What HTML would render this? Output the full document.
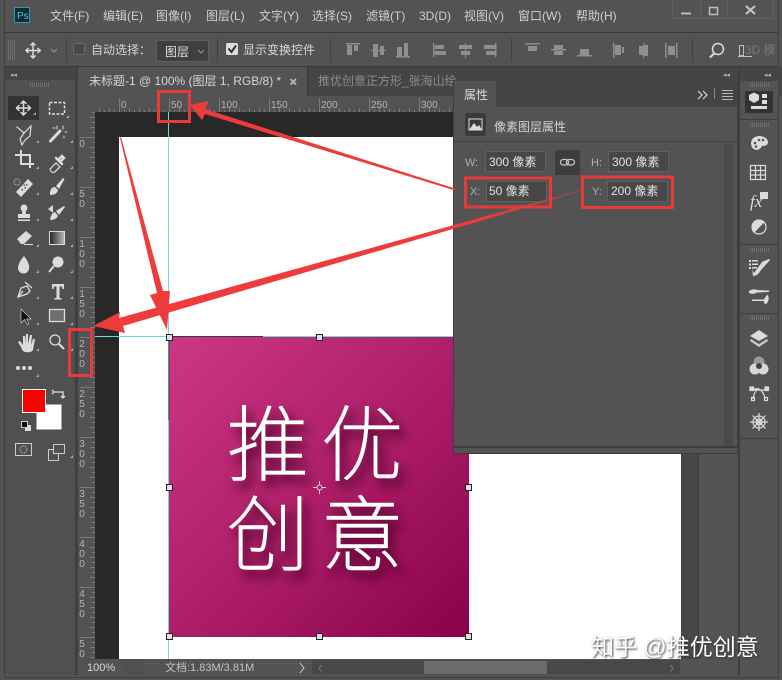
<!DOCTYPE html>
<html lang="zh">
<head>
<meta charset="utf-8">
<style>
html,body{margin:0;padding:0;background:#535353;width:782px;height:680px;overflow:hidden}
svg{display:block}
text{font-family:"Liberation Sans","Noto Sans CJK SC",sans-serif}
</style>
</head>
<body>
<svg width="782" height="680" viewBox="0 0 782 680" xmlns="http://www.w3.org/2000/svg">
<defs>
<linearGradient id="sq" x1="0" y1="0" x2="1" y2="1">
<stop offset="0" stop-color="#cc3784"/><stop offset=".5" stop-color="#ae1f69"/><stop offset="1" stop-color="#8a004a"/>
</linearGradient>
<linearGradient id="gr" x1="0" y1="0" x2="1" y2="0"><stop offset="0" stop-color="#222"/><stop offset="1" stop-color="#bbb"/></linearGradient>
<linearGradient id="ar3" gradientUnits="userSpaceOnUse" x1="490" y1="0" x2="582" y2="0"><stop offset="0" stop-color="#ee3b3b"/><stop offset="1" stop-color="#7d4f4f"/></linearGradient>
<filter id="sh" x="-30%" y="-30%" width="160%" height="160%"><feGaussianBlur stdDeviation="5"/></filter>
<filter id="wm" x="-10%" y="-30%" width="120%" height="160%"><feGaussianBlur stdDeviation="1"/></filter>
<pattern id="ht" x="119" y="96" width="10" height="16" patternUnits="userSpaceOnUse"><path d="M.5 12V16M5.500 14V16" stroke="#7a7a7a" stroke-width="1" fill="none"/></pattern>
<pattern id="vt" x="78" y="137" width="17" height="10" patternUnits="userSpaceOnUse"><path d="M12 .5H17M14 5.500H17" stroke="#7a7a7a" stroke-width="1" fill="none"/></pattern>
<pattern id="grip" width="2" height="2" patternUnits="userSpaceOnUse"><rect width="1" height="2" fill="#6e6e6e"/></pattern>
</defs>

<!-- window base -->
<rect width="782" height="680" fill="#535353"/>
<path d="M4.500 0V677M778.500 0V677M4 677.500H779" stroke="#3e3e3e" fill="none"/>
<rect y="32" x="4" width="775" height="1" fill="#3a3a3a"/>
<rect y="66" x="4" width="775" height="1" fill="#3a3a3a"/>

<!-- menu -->
<rect x="14.500" y="7.500" width="15" height="15" fill="#0f2c3a" stroke="#2f9ab0"/>
<text x="17" y="19" font-size="10" fill="#4fc3df">Ps</text>
<g font-size="12" fill="#d0d0d0">
<text x="50" y="20">文件(F)</text>
<text x="103" y="20">编辑(E)</text>
<text x="156" y="20">图像(I)</text>
<text x="206" y="20">图层(L)</text>
<text x="259" y="20">文字(Y)</text>
<text x="312" y="20">选择(S)</text>
<text x="366" y="20">滤镜(T)</text>
<text x="419" y="20">3D(D)</text>
<text x="464" y="20">视图(V)</text>
<text x="518" y="20">窗口(W)</text>
<text x="576" y="20">帮助(H)</text>
</g>
<path d="M672.500 0V18.500H773.500V0M700.500 0V18.500M727.500 0V18.500" stroke="#606060" fill="none"/>
<path d="M681 13.500H691" stroke="#bdbdbd" stroke-width="2"/>
<rect x="709.500" y="7.500" width="8" height="7" fill="none" stroke="#bdbdbd" stroke-width="1.500"/>
<path d="M746 6L755 14M755 6L746 14" stroke="#c8c8c8" stroke-width="2"/>

<!-- options bar -->
<rect x="8" y="40" width="7" height="20" fill="url(#grip)"/>
<g stroke="#dcdcdc" stroke-width="1.500" fill="none">
<path d="M33 43V58M26 50.500H41"/><path d="M30.500 45.500L33 43L35.500 45.500M30.500 55.500L33 58L35.500 55.500M28.500 48L26 50.500L28.500 53M37.500 48L40 50.500L37.500 53"/>
</g>
<path d="M51 49L54 52L57 49" stroke="#999" fill="none"/>
<path d="M66.500 38V62M217.500 38V62M330.500 38V62M511.500 38V62M692.500 38V62" stroke="#404040"/>
<rect x="73.500" y="43.500" width="11" height="11" rx="2" fill="#484848" stroke="#6a6a6a"/>
<text x="91" y="54" font-size="12" fill="#d4d4d4">自动选择：</text>
<rect x="156.500" y="40.500" width="52" height="21" rx="1" fill="#3f3f3f" stroke="#5f5f5f"/>
<text x="165" y="56" font-size="12" fill="#e0e0e0">图层</text>
<path d="M198 50L201 53L204 50" stroke="#999" fill="none"/>
<rect x="226" y="43" width="12" height="12" rx="2" fill="#dedede"/>
<path d="M228.500 48.500L231.500 52L236 45.500" stroke="#333" stroke-width="2" fill="none"/>
<text x="243" y="54" font-size="12" fill="#d8d8d8">显示变换控件</text>
<g fill="#8f8f8f">
<path d="M346 43h14v1.500h-14zM347 45h5v10h-5zM354 45h4v6h-4z"/>
<path d="M371 50h15v1h-15zM373 44h5v13h-5zM380 46h4v9h-4z"/>
<path d="M396 56h14v1.500h-14zM397 47h5v9h-5zM404 43h4v13h-4z"/>
<path d="M433 43h1.500v14H433zM435 45h9v4h-9zM435 51h11v4h-11z"/>
<path d="M465 43h1v15h-1zM459 45h13v4h-13zM461 51h9v4h-9z"/>
<path d="M495 43h1.500v14H495zM484 45h11v4H484zM486 51h9v4H486z"/>
<path d="M525 43h15v1.500h-15zM528 46h9v5h-9z"/>
<path d="M551 49h15v1.500h-15zM554 45h9v4h-9zM554 51h9v4h-9z"/>
<path d="M577 55h15v1.500h-15zM580 49h9v6h-9z"/>
<path d="M613 43h1.500v15H613zM615 45h6v10h-6zM622 47h2v6h-2z"/>
<path d="M643 43h1v15h-1zM639 46h4v9h-4zM644 45h4v11h-4z"/>
<path d="M676 43h1.500v15H676zM668 46h7v9h-7zM665 43h1.500v15H665z"/>
</g>
<circle cx="718" cy="49" r="5.500" fill="none" stroke="#ddd" stroke-width="1.500"/>
<path d="M714 53.500L710 57.500" stroke="#ddd" stroke-width="2"/>
<rect x="739.500" y="45.500" width="4" height="10" fill="none" stroke="#bbb"/>
<path d="M738 56.500H752" stroke="#bbb"/>
<text x="745" y="54" font-size="12" fill="#787878">3D 模</text>

<!-- toolbox -->
<rect x="5" y="67" width="70" height="608" fill="#505050"/>
<rect x="5" y="67" width="70" height="13" fill="#454545"/>
<text x="10" y="77" font-size="7" fill="#b0b0b0">◂◂</text>
<rect x="29" y="83" width="20" height="4" fill="url(#grip)"/>
<rect x="75" y="67" width="3" height="608" fill="#404040"/>
<rect x="8" y="96" width="31" height="24" rx="1" fill="#333"/>
<g stroke="#dcdcdc" stroke-width="1.500" fill="none" stroke-linecap="round">
 <path d="M23.500 101V115M16.500 108H30.500M21 103.500L23.500 101L26 103.500M21 112.500L23.500 115L26 112.500M19 105.500L16.500 108L19 110.500M28 105.500L30.500 108L28 110.500"/>
 <rect x="49.500" y="102.500" width="15" height="11.500" stroke-dasharray="3 1.500" stroke-linecap="butt"/>
 <path d="M17 127L24 133L31 126L30 136L25 140L22 145L20 139L24 133" stroke-width="1.200"/>
 <path d="M50.500 141L60 131" stroke-width="3"/><path d="M57 126V129M63 126V129M65 132H67M55 128H53M64 136V138" stroke-width="1"/>
 <path d="M15 155H30V168M21 150V164H34" stroke-width="2" stroke-linecap="butt"/>
 <path d="M50 169L56 163L60 167L54 172.500Q51 173 50 169Z" stroke-width="1.200"/><path d="M58 160L62 156L64 158L60 162M56 158L62 164" stroke-width="2.500"/>
</g>
<g fill="#dcdcdc">
 <path d="M16 192L28 179L33 184L21 197Z"/>
 <path d="M21.500 189h1.500v1.500h-1.500zM24.500 187h1.500v1.500h-1.500zM26 184h1.500v1.500H26zM23.500 184.500h1.500v1.500h-1.500z" fill="#555"/>
 <circle cx="17" cy="182" r="3" fill="none" stroke="#ccc" stroke-dasharray="1 1"/>
 <path d="M50 194Q50 187 55 187L58 190Q57 195 50 195ZM56 186L63 178L64.500 179L59 189Z"/>
 <circle cx="24" cy="208" r="3.500"/><path d="M22.500 210H25.500L26 214H30V218H18V214H22Z"/><rect x="18" y="219.500" width="12" height="1.500"/>
 <path d="M50 220Q51 213 55 212L58 216Q56 220 50 220ZM56 211L64 206L65 207L59 215Z"/>
 <path d="M48 209L53 205V213Z"/>
 <path d="M17 239L26 231L32 236L24 244H21Z"/><rect x="24" y="244" width="9" height="1"/>
 <path d="M24 256Q30 264 29 268A5.500 5.500 0 0 1 18 268Q18 263 24 256Z"/>
 <circle cx="58" cy="262" r="5.500"/><path d="M54 266L49 272" stroke="#dcdcdc" stroke-width="2"/>
 <path d="M52 284H64V289H62.500L62 286.500H59.500V298H61.500V299.500H54.500V298H56.500V286.500H54L53.500 289H52Z"/>
 <path d="M18 342L20 341L23 345V336H25V344L26 334H28V344L30 335H32L31 345L33 339H35L33 350Q31 353 25 352Q22 351 21 347Z"/>
 <circle cx="18" cy="368" r="2"/><circle cx="24" cy="368" r="2"/><circle cx="30" cy="368" r="2"/>
</g>
<rect x="49.500" y="231.500" width="15" height="13" fill="url(#gr)" stroke="#ddd"/>
<g stroke="#dcdcdc" stroke-width="1.300" fill="none">
 <path d="M18 297L21 288L27 286L30 291L27 294L18 297ZM25 282L32 288M23 291L19 296"/>
 <rect x="49.500" y="309.500" width="15" height="12" fill="#6e6e6e"/>
 <circle cx="55" cy="340" r="5"/><path d="M59 344L64 349" stroke-width="2"/>
</g>
<path d="M21 309V323L24.500 319.500L27.500 324.500L29 323.500L26.500 319H31Z" fill="#111" stroke="#ccc" stroke-width=".7"/>
<g fill="#a8a8a8">
<path d="M33 115l3 0 0-3zM66 118l3 0 0-3zM36 143l3 0 0-3zM70 143l3 0 0-3zM36 169l3 0 0-3zM70 169l3 0 0-3zM36 195l3 0 0-3zM70 195l3 0 0-3zM36 221l3 0 0-3zM70 221l3 0 0-3zM36 247l3 0 0-3zM70 247l3 0 0-3zM36 273l3 0 0-3zM70 273l3 0 0-3zM36 299l3 0 0-3zM70 299l3 0 0-3zM36 325l3 0 0-3zM70 325l3 0 0-3zM36 351l3 0 0-3zM70 351l3 0 0-3zM36 377l3 0 0-3zM70 458l3 0 0-3z"/>
</g>
<rect x="36.500" y="404.500" width="25" height="25" fill="#fff"/>
<rect x="22.500" y="389.500" width="23" height="23" fill="#f00" stroke="#fff"/>
<path d="M54 392H63V397M52 394L54 392L52 390M61 396L63 398L65 396" stroke="#ddd" stroke-width="1.300" fill="none"/>
<rect x="25" y="425" width="6" height="6" fill="#ddd"/><rect x="21.500" y="421.500" width="6" height="6" fill="#111" stroke="#ccc"/>
<rect x="15.500" y="443.500" width="16" height="12" fill="none" stroke="#ccc"/>
<circle cx="23.500" cy="449.500" r="3.500" fill="none" stroke="#ccc" stroke-dasharray="1 1"/>
<rect x="48.500" y="449.500" width="10" height="11" fill="#505050" stroke="#ccc"/>
<rect x="53.500" y="444.500" width="11" height="9" fill="#505050" stroke="#ccc"/>

<!-- tabs -->
<rect x="78" y="67" width="704" height="29" fill="#454545"/>
<rect x="78" y="67" width="229" height="29" fill="#535353"/>
<rect x="307" y="67" width="1" height="29" fill="#383838"/>
<text x="89" y="85" font-size="12" fill="#d6d6d6">未标题-1 @ 100% (图层 1, RGB/8) *</text>
<path d="M290.500 79L296 84.500M296 79L290.500 84.500" stroke="#bbb" stroke-width="1.800"/>
<text x="318" y="85" font-size="12" fill="#8c8c8c">推优创意正方形_张海山绘</text>

<!-- rulers -->
<rect x="78" y="96" width="376" height="16" fill="#535353"/>
<rect x="95" y="96" width="359" height="16" fill="url(#ht)"/>
<rect x="78" y="112" width="17" height="547" fill="#535353"/>
<rect x="78" y="112" width="17" height="547" fill="url(#vt)"/>
<path d="M119.500 98V112M169.500 98V112M219.500 98V112M269.500 98V112M319.500 98V112M369.500 98V112M419.500 98V112" stroke="#7a7a7a"/>
<path d="M80 137.500H95M80 187.500H95M80 237.500H95M80 287.500H95M80 337.500H95M80 387.500H95M80 437.500H95M80 487.500H95M80 537.500H95M80 587.500H95M80 637.500H95" stroke="#7a7a7a"/>
<g font-size="10" fill="#b4b4b4">
<text x="121" y="108">0</text><text x="171" y="108">50</text><text x="221" y="108">100</text><text x="271" y="108">150</text><text x="321" y="108">200</text><text x="371" y="108">250</text><text x="421" y="108">300</text>
</g>
<g font-size="10" fill="#b4b4b4" text-anchor="middle">
<text x="82" y="147">0</text>
<text x="82" y="197">5</text><text x="82" y="207">0</text>
<text x="82" y="247">1</text><text x="82" y="257">0</text><text x="82" y="267">0</text>
<text x="82" y="297">1</text><text x="82" y="307">5</text><text x="82" y="317">0</text>
<text x="82" y="347">2</text><text x="82" y="357">0</text><text x="82" y="367">0</text>
<text x="82" y="397">2</text><text x="82" y="407">5</text><text x="82" y="417">0</text>
<text x="82" y="447">3</text><text x="82" y="457">0</text><text x="82" y="467">0</text>
<text x="82" y="497">3</text><text x="82" y="507">5</text><text x="82" y="517">0</text>
<text x="82" y="547">4</text><text x="82" y="557">0</text><text x="82" y="567">0</text>
<text x="82" y="597">4</text><text x="82" y="607">5</text><text x="82" y="617">0</text>
<text x="82" y="647">5</text><text x="82" y="657">0</text>
</g>

<!-- canvas -->
<rect x="95" y="112" width="605" height="547" fill="#282828"/>
<rect x="119" y="137" width="562" height="522" fill="#fff"/>
<rect x="681" y="453" width="18" height="222" fill="#474747"/>
<rect x="698" y="453" width="1" height="222" fill="#3a3a3a"/>
<rect x="699" y="453" width="39" height="222" fill="#535353"/>
<rect x="738" y="67" width="2" height="608" fill="#3e3e3e"/>

<!-- artwork -->
<rect x="169" y="337" width="300" height="300" fill="url(#sq)"/>
<g text-anchor="middle" font-size="82">
<g fill="#3c0020" stroke="#3c0020" stroke-width="3" opacity=".75" filter="url(#sh)">
<text x="326" y="481" letter-spacing="12" style="font-family:'Noto Sans CJK SC',sans-serif;font-weight:100">推优</text>
<text x="326" y="571" letter-spacing="12" style="font-family:'Noto Sans CJK SC',sans-serif;font-weight:100">创意</text>
</g>
<g fill="#fff" stroke="#fff" stroke-width="1.500">
<text x="321" y="474" letter-spacing="12" style="font-family:'Noto Sans CJK SC',sans-serif;font-weight:100">推优</text>
<text x="321" y="564" letter-spacing="12" style="font-family:'Noto Sans CJK SC',sans-serif;font-weight:100">创意</text>
</g>
</g>
<!-- guides -->
<path d="M168.500 112V659" stroke="#66dede"/>
<path d="M95 336.500H454" stroke="#66dede"/>
<path d="M169 336.500H263" stroke="#333a44"/>
<path d="M169 337V420" stroke="#3a4550"/>
<!-- handles -->
<g fill="#e8dce4" stroke="#222">
<rect x="166.500" y="334.500" width="6" height="6"/><rect x="316.500" y="334.500" width="6" height="6"/>
<rect x="166.500" y="484.500" width="6" height="6"/><rect x="465.500" y="484.500" width="6" height="6"/>
<rect x="166.500" y="633.500" width="6" height="6"/><rect x="316.500" y="633.500" width="6" height="6"/><rect x="465.500" y="633.500" width="6" height="6"/>
</g>
<g stroke="#e8d0e0" fill="none"><circle cx="319.500" cy="487.500" r="2.500"/><path d="M319.500 481V485M319.500 490V494M313 487.500H317M322 487.500H326"/></g>

<!-- properties panel -->
<rect x="454" y="81" width="284" height="372" fill="#535353"/>
<rect x="454" y="81" width="284" height="26" fill="#444"/>
<rect x="454" y="81" width="42" height="27" fill="#535353"/>
<path d="M453.500 81V453M737.500 81V453" stroke="#3e3e3e"/>
<rect x="454" y="446" width="284" height="2" fill="#3c3c3c"/>
<rect x="454" y="453" width="284" height="1" fill="#3a3a3a"/>
<text x="464" y="99" font-size="12" fill="#dcdcdc">属性</text>
<path d="M698 91L702 95L698 99M703 91L707 95L703 99" stroke="#ddd" fill="none" stroke-width="1.200"/>
<path d="M714.500 88V99" stroke="#888"/>
<path d="M722 90.500H733M722 93.500H733M722 96.500H733M722 99.500H733" stroke="#b8b8b8"/>
<rect x="465" y="113" width="21" height="23" rx="2" fill="#3a3a3a"/>
<rect x="469" y="119" width="13" height="11" fill="none" stroke="#ddd"/>
<path d="M469 130L474 123L477 127L479 125L482 130Z" fill="#ddd"/>
<text x="494" y="131" font-size="12" fill="#d4d4d4">像素图层属性</text>
<rect x="454" y="141" width="284" height="1" fill="#414141"/>
<rect x="724" y="143" width="9" height="303" fill="#4a4a4a"/>
<g font-size="11" fill="#b0b0b0">
<text x="465" y="166">W:</text><text x="591" y="166">H:</text><text x="470" y="195">X:</text><text x="592" y="195">Y:</text>
</g>
<g fill="#474747" stroke="#616161">
<rect x="485.500" y="151.500" width="60" height="20"/>
<rect x="608.500" y="151.500" width="60" height="20"/>
<rect x="486.500" y="181.500" width="60" height="20"/>
<rect x="607.500" y="181.500" width="60" height="20"/>
</g>
<rect x="555" y="150" width="25" height="25" rx="2" fill="#3d3d3d"/>
<g fill="none" stroke="#c8c8c8" stroke-width="1.300"><rect x="560.500" y="159.500" width="8" height="5.500" rx="2.700"/><rect x="566.500" y="159.500" width="8" height="5.500" rx="2.700"/></g>
<g font-size="12" fill="#e2e2e2">
<text x="489" y="166">300 像素</text><text x="612" y="166">300 像素</text>
<text x="489" y="195">50 像素</text><text x="611" y="195">200 像素</text>
</g>

<!-- right dock -->
<rect x="740" y="81" width="38" height="594" fill="#535353"/>
<text x="723" y="77" font-size="7" fill="#b0b0b0">◂◂</text>
<text x="764" y="77" font-size="7" fill="#b0b0b0">◂◂</text>
<rect x="749" y="83" width="20" height="4" fill="url(#grip)"/>
<rect x="749" y="123" width="20" height="4" fill="url(#grip)"/>
<rect x="749" y="248" width="20" height="4" fill="url(#grip)"/>
<rect x="749" y="316" width="20" height="4" fill="url(#grip)"/>
<path d="M740 119.500H778M740 244.500H778M740 313.500H778M740 438.500H778" stroke="#3e3e3e"/>
<rect x="745" y="91" width="28" height="22" fill="#333"/>
<g fill="#dcdcdc">
<path d="M749 95L754 92.500L759 95V100L754 103L749 100Z"/>
<rect x="762" y="94" width="5" height="4"/><rect x="762" y="100" width="5" height="4"/>
<rect x="751" y="106" width="16" height="3"/>
<path d="M751 143Q752 136 760 136Q768 137 768 143Q767 146 762 146Q760 150 756 150Q751 149 751 143Z"/>
<rect x="760" y="192" width="8" height="7"/>
<path d="M759 220A7.500 7.500 0 0 0 754 233L764.500 222Q762 220 759 220Z"/>
<path d="M752 268Q753 272 754 273L762 262L769 259L770 260L761 270Q758 276 753 276Z"/>
<path d="M749 260h2v2h-2zM749 263.500h2v2h-2zM749 267h2v2h-2zM752 260h6v1.500h-6zM752 263.500h6v1.500h-6zM752 267h5v1.500h-5z"/>
<path d="M749 291Q753 288 757 290L769 290.500V292L757 292.500Q753 295 749 293Z"/>
<path d="M752 299.500H764Q766 295 768 295Q770 301 766 304Q764 304 764 301L752 301Z"/>
<path d="M759 330L768 336L759 341L750 336Z"/>
<path d="M751 339L759 344L767 339L768 341L759 347L750 341Z" opacity=".85"/>
<circle cx="759" cy="362" r="5.500" fill="#9a9a9a"/><circle cx="755" cy="369" r="5.500" fill="#d8d8d8"/><circle cx="763" cy="369" r="5.500" fill="#d8d8d8"/><circle cx="759" cy="366" r="3" fill="#444"/>
</g>
<g fill="#555"><circle cx="755" cy="143" r="1.300"/><circle cx="759" cy="140" r="1.300"/><circle cx="763" cy="140" r="1.300"/><circle cx="756" cy="146.500" r="1.300"/></g>
<g fill="none" stroke="#dcdcdc" stroke-width="1.200">
<rect x="750.500" y="165.500" width="15" height="14"/><path d="M755.500 165.500V179.500M760.500 165.500V179.500M750.500 170.500H765.500M750.500 175H765.500"/>
<circle cx="759" cy="227" r="7"/>
<path d="M751 390H767M752 390Q755 388 759 389Q764 392 765 399M753 399Q754 391 759 389"/>
<rect x="750" y="387" width="3.500" height="3.500" fill="#dcdcdc"/><rect x="765" y="387" width="3.500" height="3.500" fill="#dcdcdc"/>
<rect x="751.500" y="397.500" width="3" height="3"/><rect x="764.500" y="397.500" width="3" height="3"/>
<path d="M759 413V431M750 422H768M752.500 415.500L765.500 428.500M765.500 415.500L752.500 428.500"/>
<circle cx="759" cy="422" r="3"/><circle cx="759" cy="422" r="6"/>
</g>
<text x="750" y="207" font-size="17" font-style="italic" fill="#dcdcdc" style="font-family:'Liberation Serif',serif">fx</text>

<!-- status -->
<rect x="78" y="659" width="622" height="16" fill="#535353"/>
<rect x="124" y="659" width="20" height="16" fill="#505050"/>
<rect x="312" y="660" width="368" height="14" fill="#484848"/>
<rect x="424" y="661" width="123" height="13" fill="#6b6b6b"/>
<text x="87" y="671" font-size="11" fill="#d8d8d8">100%</text>
<text x="165" y="671" font-size="11" fill="#c4c4c4">文档:1.83M/3.81M</text>
<path d="M300 663L304 668L300 673" stroke="#ccc" fill="none"/>
<path d="M322 665L319 668.500L322 672M670 665L673 668.500L670 672" stroke="#777" fill="none"/>

<!-- red annotations -->
<g fill="#ee3b3b">
<path d="M455 188.500L205 109L209 101L190 105L202 120L205 114L455 190.500Z"/>
<path d="M120 138L157 293L150 295L167 330L170 291L163 291L121 137Z"/>
<path d="M93 326L120 312L119 318L582 189.500L582 191L123 326L125 333Z" fill="url(#ar3)"/>
</g>
<g fill="none" stroke="#e83a3a" stroke-width="3">
<rect x="158.500" y="91.500" width="31" height="30"/>
<rect x="69.500" y="329.500" width="22" height="46"/>
<rect x="465.500" y="178" width="85" height="29"/>
<rect x="582.500" y="177" width="90" height="30.500"/>
</g>

<!-- watermark -->
<g font-size="23">
<text x="592" y="656" fill="#333" filter="url(#wm)">知乎 @推优创意</text>
<text x="591" y="655" fill="#fff">知乎 @推优创意</text>
</g>
</svg>
</body>
</html>
